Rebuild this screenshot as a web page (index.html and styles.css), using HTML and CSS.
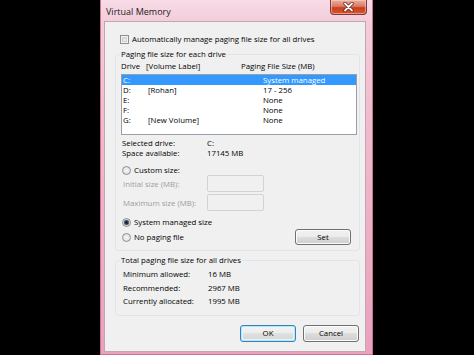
FILE: index.html
```html
<!DOCTYPE html>
<html>
<head>
<meta charset="utf-8">
<link rel="stylesheet" href="styles.css">
</head>
<body>
<div class="window">
  <div class="titlebar">
    <span class="title">Virtual Memory</span>
    <div class="close">
      <svg width="11" height="10" viewBox="0 0 11 10"><path d="M2 1.5 L9 8.5 M9 1.5 L2 8.5" stroke="#5a1a10" stroke-width="3.2" stroke-linecap="round"/><path d="M2 1.5 L9 8.5 M9 1.5 L2 8.5" stroke="#ffffff" stroke-width="1.8" stroke-linecap="round"/></svg>
    </div>
  </div>
  <div class="client">
    <div class="check-row"><span class="checkbox"></span><span>Automatically manage paging file size for all drives</span></div>

    <div class="group g1">
      <div class="legend">Paging file size for each drive</div>
      <div class="cols"><span>Drive</span><span>[Volume Label]</span><span>Paging File Size (MB)</span></div>
      <div class="listbox">
        <div class="row sel"><span>C:</span><span></span><span>System managed</span></div>
        <div class="row"><span>D:</span><span>[Rohan]</span><span>17 - 256</span></div>
        <div class="row"><span>E:</span><span></span><span>None</span></div>
        <div class="row"><span>F:</span><span></span><span>None</span></div>
        <div class="row"><span>G:</span><span>[New Volume]</span><span>None</span></div>
      </div>
      <div class="info">
        <span>Selected drive:</span><span>C:</span>
        <span>Space available:</span><span>17145 MB</span>
      </div>
      <div class="radio-row custom"><span class="radio"></span><span>Custom size:</span></div>
      <div class="sizes">
        <span class="dis">Initial size (MB):</span><span class="textbox"></span>
        <span class="dis">Maximum size (MB):</span><span class="textbox"></span>
      </div>
      <div class="bottom-row">
        <div class="radios">
          <div class="radio-row"><span class="radio on"></span><span>System managed size</span></div>
          <div class="radio-row"><span class="radio"></span><span>No paging file</span></div>
        </div>
        <button class="btn set">Set</button>
      </div>
    </div>

    <div class="group g2">
      <div class="legend">Total paging file size for all drives</div>
      <div class="totals">
        <span>Minimum allowed:</span><span>16 MB</span>
        <span>Recommended:</span><span>2967 MB</span>
        <span>Currently allocated:</span><span>1995 MB</span>
      </div>
    </div>

    <div class="buttons">
      <button class="btn default">OK</button>
      <button class="btn">Cancel</button>
    </div>
  </div>
</div>
</body>
</html>
```

FILE: styles.css
```css
html, body {
  margin: 0;
  padding: 0;
  background: #000;
}
body {
  width: 474px;
  height: 355px;
  overflow: hidden;
  font-family: "Open Sans", "Liberation Sans", sans-serif;
}
.window {
  margin-left: 100px;
  width: 273px;
  height: 355px;
  box-sizing: border-box;
  padding: 0 8px 4px 5px;
  display: flex;
  flex-direction: column;
  background: linear-gradient(to bottom, #f7dbe6 0, #f3cdda 22px, #efbccd 120px, #e9a1bd 355px);
  box-shadow: inset 1px 0 0 #c87496, inset -1px 0 0 #c87496, inset 0 -1px 0 #c87496;
}
.titlebar {
  height: 22px;
  display: flex;
  justify-content: space-between;
  align-items: flex-start;
  margin-right: -2px;
}
.title {
  margin-left: 1px;
  padding-top: 1px;
  line-height: 22px;
  font-size: 9px;
  color: #1a1a1a;
}
.close {
  width: 37px;
  height: 15px;
  box-sizing: border-box;
  border: 1px solid #7e3a3a;
  border-top: none;
  border-radius: 0 0 4px 4px;
  background: linear-gradient(to bottom, #eab0a0 0, #dc7a62 45%, #c8401f 55%, #d9552c 100%);
  box-shadow: inset 0 0 0 1px rgba(255, 220, 210, 0.5);
  display: flex;
  align-items: center;
  justify-content: center;
}
.close svg { display: block; }
.client {
  flex: 1;
  background: #f0f0f0;
  box-shadow: 0 0 0 1px #c7a2b2;
  padding-top: 12px;
  font-size: 7.8px;
  line-height: 10px;
  color: #000;
  display: flex;
  flex-direction: column;
}
.check-row {
  height: 10px;
  padding-left: 15px;
  display: flex;
  align-items: center;
  gap: 3px;
}
.checkbox {
  width: 9px;
  height: 9px;
  box-sizing: border-box;
  border: 1px solid #8e8f8f;
  background: linear-gradient(135deg, #d3d3d3, #f7f7f7);
  box-shadow: inset 0 0 0 1px #f4f4f4, inset 0 0 0 2px #cfcfcf;
}
.group {
  margin-left: 10px;
  width: 245px;
  box-sizing: border-box;
  border: 1px solid #e0e5e9;
  border-radius: 3px;
  padding: 0 2px 5px 5px;
}
.g1 { margin-top: 10px; }
.g2 { margin-top: 9px; padding-bottom: 6px; }
.legend {
  height: 10px;
  margin-top: -6px;
  margin-left: -1px;
  padding: 0 1px;
  width: max-content;
  background: #f0f0f0;
}
.cols {
  margin-top: 2px;
  height: 10px;
  display: grid;
  grid-template-columns: 25px 95px 1fr;
}
.listbox {
  margin-top: 3px;
  height: 61px;
  box-sizing: border-box;
  border: 1px solid #9a9ea6;
  background: #fff;
  padding: 0 0 0 1px;
}
.row {
  height: 10px;
  display: grid;
  grid-template-columns: 25px 115px 1fr;
  padding-left: 1px;
  margin-left: -1px;
}
.row.sel {
  background: #3399ff;
  color: #fff;
}
.info {
  margin-top: 3px;
  padding-left: 1px;
  display: grid;
  grid-template-columns: 85px 1fr;
}
.radio-row {
  height: 10px;
  display: flex;
  align-items: center;
  gap: 3px;
  padding-left: 1px;
}
.custom { margin-top: 7px; }
.radio {
  width: 9px;
  height: 9px;
  box-sizing: border-box;
  border-radius: 50%;
  border: 1px solid #8f8f8f;
  background: radial-gradient(circle at 50% 50%, #f6f6f6 0, #e2e2e2 70%, #d0d0d0 100%);
}
.radio.on {
  background: radial-gradient(circle at 50% 50%, #151c24 0, #26384a 1.6px, #7f93a6 2.6px, #e6e6e6 3.2px, #d6d6d6 100%);
}
.sizes {
  display: grid;
  grid-template-columns: 84px 57px;
  grid-auto-rows: 17px;
  row-gap: 2px;
  padding-left: 2px;
  align-items: center;
}
.dis { color: #9d9d9d; }
.textbox {
  height: 17px;
  box-sizing: border-box;
  border: 1px solid #d3d3d3;
  border-radius: 2px;
  background: #f0f0f0;
}
.bottom-row {
  margin-top: 6px;
  display: flex;
  align-items: flex-start;
}
.radios {
  display: flex;
  flex-direction: column;
  gap: 5px;
}
.btn {
  font: inherit;
  color: #000;
  padding: 0;
  margin: 0;
  width: 56px;
  height: 17px;
  box-sizing: border-box;
  border: 1px solid #707070;
  border-radius: 3px;
  background: linear-gradient(to bottom, #f2f2f2 0, #ebebeb 50%, #dddddd 50%, #cfcfcf 100%);
  box-shadow: inset 0 0 0 1px #fbfbfb;
  line-height: 15px;
}
.set {
  margin-left: auto;
  margin-right: 6px;
  margin-top: 12px;
  height: 16px;
  line-height: 14px;
}
.totals {
  margin-top: 3px;
  padding-left: 2px;
  display: grid;
  grid-template-columns: 85px 1fr;
  grid-auto-rows: 13.5px;
  line-height: 13.5px;
}
.buttons {
  margin-top: 9px;
  display: flex;
  justify-content: flex-end;
  gap: 7px;
  padding-right: 6px;
}
.btn.default {
  border-color: #3c7fb1;
  box-shadow: inset 0 0 0 1px #b6e8fb, inset 0 0 0 2px #e3f5fd;
  background: linear-gradient(to bottom, #f4f4f4 0, #ececec 50%, #e0e0e0 50%, #d6d6d6 100%);
}
```
